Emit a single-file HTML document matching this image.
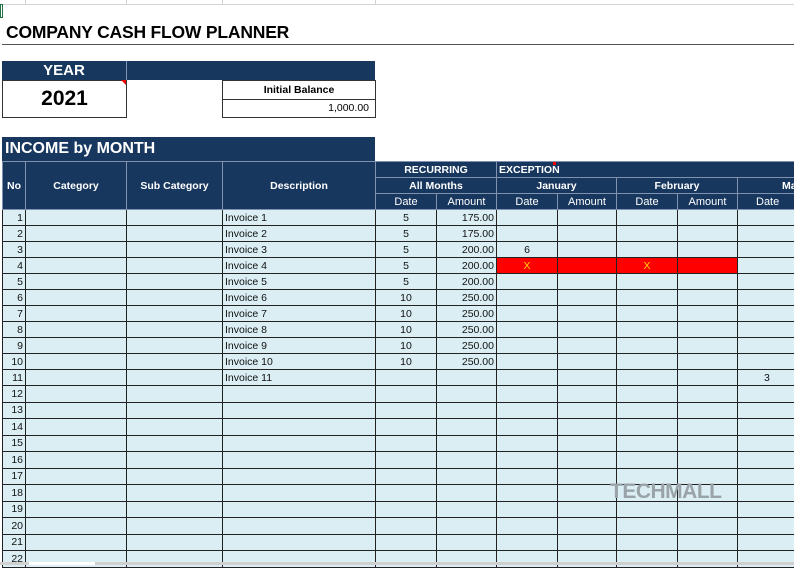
<!DOCTYPE html>
<html><head><meta charset="utf-8"><style>
*{box-sizing:border-box;margin:0;padding:0}
body{width:794px;height:565px;overflow:hidden;background:#fff;font-family:"Liberation Sans",sans-serif;position:relative}
.a{position:absolute}
.nv{background:#17375e;color:#fff}
table{position:absolute;left:2px;top:161px;border-collapse:collapse;table-layout:fixed;width:820px}
td{border:1px solid #222;font-size:10.5px;height:16px;padding:0 2px;white-space:nowrap;overflow:hidden;background:#daeef3;color:#111;line-height:14px}
th{background:#17375e;color:#fff;font-size:10.5px;font-weight:bold;border:1px solid #7f93b0;height:16px;padding:0;line-height:14px}
th.n{font-weight:normal;font-size:11px}
td.r{text-align:right}td.c{text-align:center}
tr.t td{height:16.5px}
td.red{background:#f00;color:#ffd700;text-align:center}
</style></head><body>
<div class="a" style="left:0;top:0;width:794px;height:5px;border-bottom:1px solid #d4d4d4"></div>
<div class="a" style="left:25px;top:0;width:1px;height:5px;background:#d4d4d4"></div>
<div class="a" style="left:126px;top:0;width:1px;height:5px;background:#d4d4d4"></div>
<div class="a" style="left:222px;top:0;width:1px;height:5px;background:#d4d4d4"></div>
<div class="a" style="left:375px;top:0;width:1px;height:5px;background:#d4d4d4"></div>
<div class="a" style="left:0;top:4px;width:3px;height:14px;border:1px solid #217346"></div>
<div class="a" style="left:6px;top:22px;font-size:17.5px;font-weight:bold;color:#000;letter-spacing:-0.2px">COMPANY CASH FLOW PLANNER</div>
<div class="a" style="left:2px;top:44px;width:792px;height:1px;background:#555"></div>
<div class="a nv" style="left:2px;top:61px;width:373px;height:19px"></div>
<div class="a" style="left:126px;top:61px;width:1px;height:19px;background:#7f93b0"></div>
<div class="a" style="left:2px;top:60px;width:124px;height:20px;color:#fff;font-weight:bold;font-size:15px;text-align:center;line-height:22px">YEAR</div>
<div class="a" style="left:2px;top:80px;width:125px;height:38px;border:1px solid #333;text-align:center;font-weight:bold;font-size:21px;line-height:36px">2021</div>
<div class="a" style="left:121px;top:80px;width:0;height:0;border-left:5px solid transparent;border-top:5px solid #e00"></div>
<div class="a" style="left:222px;top:80px;width:154px;height:20px;border:1px solid #333;text-align:center;font-weight:bold;font-size:10.5px;line-height:18px">Initial Balance</div>
<div class="a" style="left:222px;top:99px;width:154px;height:19px;border:1px solid #333;text-align:right;font-size:10.5px;line-height:17px;padding-right:6px">1,000.00</div>
<div class="a nv" style="left:2px;top:137px;width:373px;height:24px;font-weight:bold;font-size:16px;line-height:24px;padding-left:3px">INCOME by MONTH</div>
<table>
<colgroup><col style="width:23px"><col style="width:101px"><col style="width:96px"><col style="width:153px"><col style="width:61px"><col style="width:60px"><col style="width:61px"><col style="width:59px"><col style="width:61px"><col style="width:60px"><col style="width:85px"></colgroup>
<tr><th rowspan="3">No</th><th rowspan="3">Category</th><th rowspan="3">Sub Category</th><th rowspan="3">Description</th><th colspan="2">RECURRING</th><th colspan="5" style="text-align:left;padding-left:2px;position:relative">EXCEPTION<span style="position:absolute;left:56px;top:0;width:3px;height:3px;background:#e00"></span></th></tr>
<tr><th colspan="2">All Months</th><th colspan="2">January</th><th colspan="2">February</th><th style="text-align:left;padding-left:44px">Ma</th></tr>
<tr><th class="n">Date</th><th class="n">Amount</th><th class="n">Date</th><th class="n">Amount</th><th class="n">Date</th><th class="n">Amount</th><th class="n" style="text-align:left;padding-left:18px">Date</th></tr>
<tr><td class="r">1</td><td></td><td></td><td>Invoice 1</td><td class="c">5</td><td class="r">175.00</td><td></td><td></td><td></td><td></td><td></td></tr>
<tr><td class="r">2</td><td></td><td></td><td>Invoice 2</td><td class="c">5</td><td class="r">175.00</td><td></td><td></td><td></td><td></td><td></td></tr>
<tr><td class="r">3</td><td></td><td></td><td>Invoice 3</td><td class="c">5</td><td class="r">200.00</td><td class="c">6</td><td></td><td></td><td></td><td></td></tr>
<tr><td class="r">4</td><td></td><td></td><td>Invoice 4</td><td class="c">5</td><td class="r">200.00</td><td class="red">X</td><td class="red"></td><td class="red">X</td><td class="red"></td><td></td></tr>
<tr><td class="r">5</td><td></td><td></td><td>Invoice 5</td><td class="c">5</td><td class="r">200.00</td><td></td><td></td><td></td><td></td><td></td></tr>
<tr><td class="r">6</td><td></td><td></td><td>Invoice 6</td><td class="c">10</td><td class="r">250.00</td><td></td><td></td><td></td><td></td><td></td></tr>
<tr><td class="r">7</td><td></td><td></td><td>Invoice 7</td><td class="c">10</td><td class="r">250.00</td><td></td><td></td><td></td><td></td><td></td></tr>
<tr><td class="r">8</td><td></td><td></td><td>Invoice 8</td><td class="c">10</td><td class="r">250.00</td><td></td><td></td><td></td><td></td><td></td></tr>
<tr><td class="r">9</td><td></td><td></td><td>Invoice 9</td><td class="c">10</td><td class="r">250.00</td><td></td><td></td><td></td><td></td><td></td></tr>
<tr><td class="r">10</td><td></td><td></td><td>Invoice 10</td><td class="c">10</td><td class="r">250.00</td><td></td><td></td><td></td><td></td><td></td></tr>
<tr><td class="r">11</td><td></td><td></td><td>Invoice 11</td><td></td><td></td><td></td><td></td><td></td><td></td><td style="padding-left:26px">3</td></tr>
<tr class="t"><td class="r">12</td><td></td><td></td><td></td><td></td><td></td><td></td><td></td><td></td><td></td><td></td></tr>
<tr class="t"><td class="r">13</td><td></td><td></td><td></td><td></td><td></td><td></td><td></td><td></td><td></td><td></td></tr>
<tr class="t"><td class="r">14</td><td></td><td></td><td></td><td></td><td></td><td></td><td></td><td></td><td></td><td></td></tr>
<tr class="t"><td class="r">15</td><td></td><td></td><td></td><td></td><td></td><td></td><td></td><td></td><td></td><td></td></tr>
<tr class="t"><td class="r">16</td><td></td><td></td><td></td><td></td><td></td><td></td><td></td><td></td><td></td><td></td></tr>
<tr class="t"><td class="r">17</td><td></td><td></td><td></td><td></td><td></td><td></td><td></td><td></td><td></td><td></td></tr>
<tr class="t"><td class="r">18</td><td></td><td></td><td></td><td></td><td></td><td></td><td></td><td></td><td></td><td></td></tr>
<tr class="t"><td class="r">19</td><td></td><td></td><td></td><td></td><td></td><td></td><td></td><td></td><td></td><td></td></tr>
<tr class="t"><td class="r">20</td><td></td><td></td><td></td><td></td><td></td><td></td><td></td><td></td><td></td><td></td></tr>
<tr class="t"><td class="r">21</td><td></td><td></td><td></td><td></td><td></td><td></td><td></td><td></td><td></td><td></td></tr>
<tr class="t"><td class="r">22</td><td></td><td></td><td></td><td></td><td></td><td></td><td></td><td></td><td></td><td></td></tr>
</table>
<div class="a" style="left:610px;top:480px;font-size:21px;font-weight:bold;color:#9aa3a8;letter-spacing:-0.5px">TECHMALL</div>
<div class="a" style="left:0;top:562px;width:794px;height:3px;background:#d0d0d0"></div>
<div class="a" style="left:29px;top:562px;width:66px;height:3px;background:#fff"></div>
</body></html>
